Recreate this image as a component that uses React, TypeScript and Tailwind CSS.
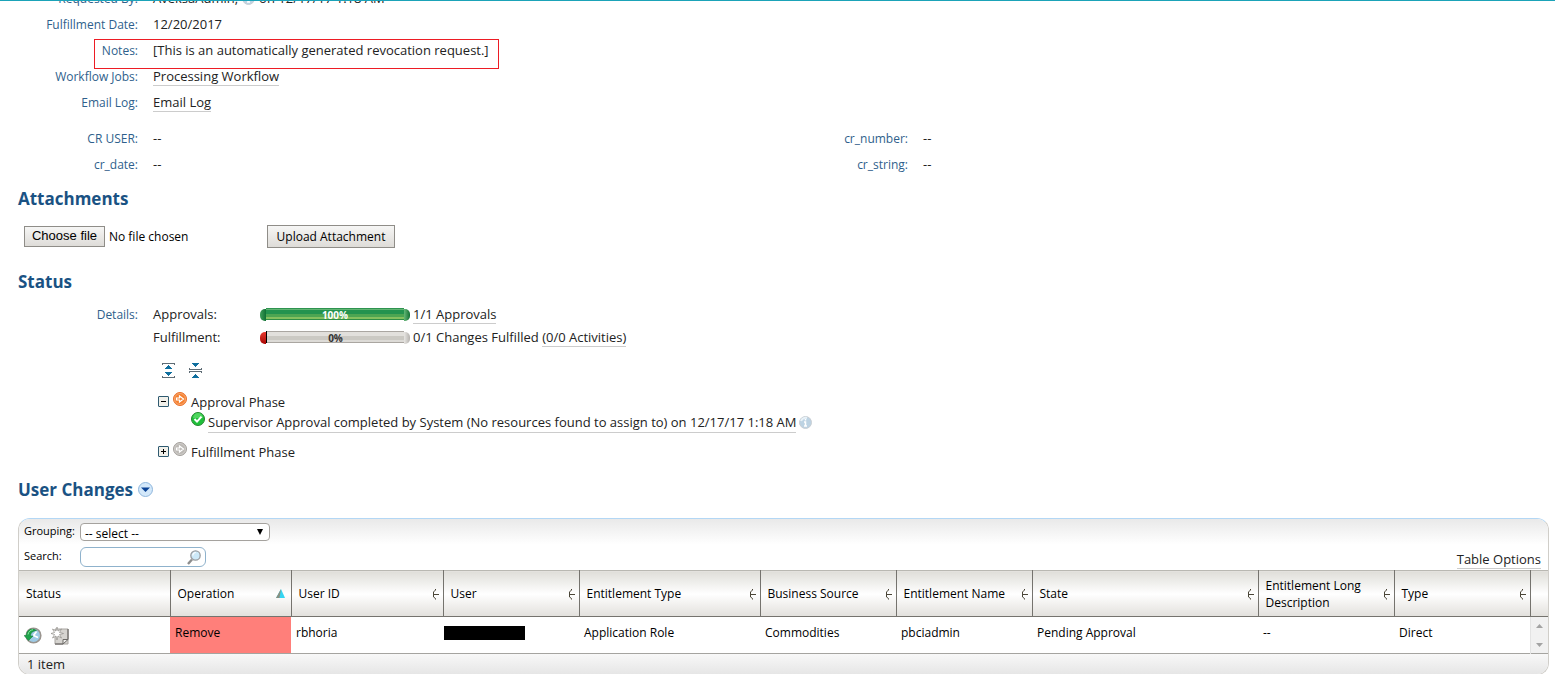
import { useRef } from "react";
import type { ReactNode } from "react";

const columns = [
  { name: "User ID", value: "rbhoria" },
  { name: "User", value: "" },
  { name: "Entitlement Type", value: "Application Role" },
  { name: "Business Source", value: "Commodities" },
  { name: "Entitlement Name", value: "pbciadmin" },
  { name: "State", value: "Pending Approval" },
  { name: "Entitlement Long Description", value: "--" },
  { name: "Type", value: "Direct" },
];

const InfoIcon = () => (
  <svg width="13" height="13" viewBox="0 0 13 13" className="shrink-0">
    <circle cx="6.5" cy="6.5" r="6" fill="#bdd3e3" stroke="#c9ced3" />
    <path d="M2 5a5 5 0 0 1 6-3" stroke="#e9f2f8" strokeWidth="2" fill="none" />
    <path d="M6.5 3v1.5M5 6h1.500v4M5 10h3" stroke="#fff" strokeWidth="1.5" fill="none" />
  </svg>
);

const ArrowBadge = ({ fill, ring }: { fill: string; ring: string }) => (
  <svg width="14" height="14" viewBox="0 0 14 14" className="shrink-0">
    <circle cx="7" cy="7" r="6.5" fill={fill} stroke={ring} />
    <circle cx="7" cy="7" r="5.5" fill="none" stroke="#fff" strokeOpacity="0.3" />
    <path d="M3.5 6h3V4L10.500 7l-4 3V8h-3z" fill={fill} stroke="#fff" strokeWidth="1.200" />
  </svg>
);

const CheckBadge = () => (
  <svg width="14" height="14" viewBox="0 0 14 14" className="shrink-0">
    <circle cx="7" cy="7" r="6.5" fill="#1fbf3a" stroke="#26862f" />
    <path d="M2 6a5 5 0 0 1 10 0z" fill="#4fd65e" />
    <path d="M3.500 7l2.500 2.600 4.500-5" fill="none" stroke="#fff" strokeWidth="2" />
  </svg>
);

const TreeBox = ({ open }: { open: boolean }) => (
  <svg width="11" height="11" viewBox="0 0 11 11" className="block">
    <rect x="0.5" y="0.5" width="10" height="10" rx="0.5" fill="#f1f0ea" stroke="#2f5a70" />
    <path d={open ? "M3 5.5h5" : "M3 5.5h5M5.500 3v5"} stroke="#000" />
  </svg>
);

const ExpandAllIcon = () => (
  <svg width="13" height="15" viewBox="0 0 13 15" shapeRendering="crispEdges">
    <path d="M0.500 2V.5h12V2M0.500 13v1.500h12V13" fill="none" stroke="#5f6c75" />
    <path d="M6 2h1v1h1v1h1v1h1v1H3V5h1V4h1V3h1zM3 9h7v1H9v1H8v1H7v1H6v-1H5v-1H4v-1H3z" fill="#0f6f9f" />
  </svg>
);

const CollapseAllIcon = () => (
  <svg width="13" height="15" viewBox="0 0 13 15" shapeRendering="crispEdges">
    <path d="M0.500 5v1.500h12V5M0.500 10V8.500h12V10" fill="none" stroke="#5f6c75" />
    <path d="M3 0h7v1H9v1H8v1H7v1H6V3H5V2H4V1H3zM6 11h1v1h1v1h1v1h1v1H3v-1h1v-1h1v-1h1z" fill="#0f6f9f" />
  </svg>
);

const MenuIcon = () => (
  <svg width="15" height="15" viewBox="0 0 15 15" className="block">
    <circle cx="7.5" cy="7.5" r="7" fill="#d3e8fa" stroke="#8fb6dc" />
    <path d="M3 5.500h9L7.500 10z" fill="#0a4296" />
  </svg>
);

const SearchIcon = () => (
  <svg width="14" height="15" viewBox="0 0 14 15" className="block">
    <path d="M5 9.500L1 14" stroke="#8d8d8d" strokeWidth="2.400" />
    <circle cx="8.500" cy="5.500" r="4.700" fill="#cde9f8" stroke="#9a9da0" strokeWidth="1.300" />
    <path d="M5.800 5.500a3 3 0 0 1 3-3" fill="none" stroke="#fff" strokeWidth="1.200" />
  </svg>
);

const SortIcon = () => (
  <svg width="9" height="9" viewBox="0 0 9 9" className="shrink-0">
    <path d="M5 0L9 9H0z" fill="#35d5f2" />
    <path d="M5 0L3.500 9H0z" fill="#8a8f80" />
  </svg>
);

const PinIcon = () => (
  <svg width="7" height="12" viewBox="0 0 7 12" className="shrink-0" fill="none" stroke="#4a4537">
    <path d="M1 6.500h6M3.500 1v1L1.500 4v5l2 1.500V11.500" />
  </svg>
);

const HistoryIcon = () => (
  <svg width="18" height="17" viewBox="0 0 18 17">
    <circle cx="9.500" cy="8.500" r="7.300" fill="#9ecbe6" stroke="#9a958f" strokeWidth="1.600" />
    <path d="M9.500 8.500l4.500 2M9.500 8.500l3-4" stroke="#fff" strokeWidth="1.800" />
    <path d="M0 8.500l4.500 5L9 9H6.500c0-3 2-5 6-5.500C8 .5 2.500 2.500 2.500 8.500z" fill="#1ea44b" stroke="#117a35" strokeWidth="0.500" />
    <path d="M4 7.500c.5-3 2.500-4.500 5-4.800" stroke="#8be79d" fill="none" />
  </svg>
);

const NewNoteIcon = () => (
  <svg width="18" height="18" viewBox="0 0 18 18">
    <path d="M4 2h13v15H4z" fill="#d6d4d0" stroke="#a8a5a1" />
    <path d="M17 2v10.500M12 17H4" stroke="#7d7a77" strokeWidth="1.500" />
    <path d="M12 17v-4.500h5z" fill="#f1f0ee" stroke="#6c6a67" />
    <path
      d="M6 0l1 4 3.500-2L8.500 5.500l4 1-4 1 2 3.500L7 9l-1 4-1-4-3.500 2 2-3.500-3.500-1 3.500-1L1.500 2 5 4z"
      fill="#fff"
      stroke="#8f8c88"
      strokeWidth="0.700"
    />
  </svg>
);

const ScrollArrow = ({ up }: { up?: boolean }) => (
  <svg width="7" height="4" viewBox="0 0 7 4" className="block">
    <path d={up ? "M0 4h7L3.500 0z" : "M0 0h7L3.500 4z"} fill="#a3a3a3" />
  </svg>
);

const Field = ({ label, children }: { label: string; children: ReactNode }) => (
  <div className="grid grid-cols-[138px_1fr] gap-[15px] h-[26px] items-baseline leading-[26px]">
    <span className="text-right text-xs leading-[26px] text-[#2f5f8c]">{label}</span>
    <span className="whitespace-nowrap">{children}</span>
  </div>
);

const TextLink = ({ children }: { children: ReactNode }) => (
  <a href="#" className="border-b border-[#ccc]">
    {children}
  </a>
);

const Heading = ({ children }: { children: ReactNode }) => (
  <h2 className="ml-[18px] text-[17px] leading-7 font-bold text-[#1a5283] flex items-center gap-[5px]">{children}</h2>
);

const ProgressBar = ({ percent }: { percent: number }) => {
  const done = percent === 100;
  return (
    <div role="progressbar" aria-label="Progress" aria-valuenow={percent} className="w-[150px] h-[14px] pt-px flex">
      <span
        className={`w-[6px] h-3 self-end shrink-0 rounded-l-[5px] ${
          done ? "bg-linear-to-r from-[#3f9f5b] to-[#0b7033]" : "bg-linear-to-b from-[#e8392f] to-[#a80000]"
        }`}
      />
      <span
        className={`flex-1 h-3 text-center text-[10px] leading-[14px] font-bold ${
          done
            ? "text-white bg-[linear-gradient(#2f9450_0_1px,#62b574_1px_2px,#23934f_2px_6px,#4da552_6px_9px,#84c05f_9px_11px,#2f8f45_11px)]"
            : "text-[#333] border-l border-l-black bg-[linear-gradient(#aaa6a1_0_1px,#e2e0dc_1px_5px,#cbc9c3_5px_9px,#dddbd7_9px_11px,#aaa6a1_11px)]"
        }`}
      >
        {percent}%
      </span>
      <span
        className={`w-[6px] h-3 self-end shrink-0 rounded-r-[5px] ${
          done ? "bg-linear-to-r from-[#63b877] to-[#0b7033]" : "bg-linear-to-r from-[#e8e6e3] to-[#b5b2ae]"
        }`}
      />
    </div>
  );
};

const App = () => {
  const fileInput = useRef<HTMLInputElement>(null);

  return (
    <div className="bg-white text-[#222] text-[13px] leading-5 font-['Open_Sans',sans-serif] border-t border-[#1ba3b8] overflow-hidden">
      <section className="-mt-4">
        <Field label="Requested By:">
          <span className="flex items-center gap-1">
            AveksaAdmin, <InfoIcon /> on 12/17/17 1:18 AM
          </span>
        </Field>
        <Field label="Fulfillment Date:">12/20/2017</Field>
        <div className="relative">
          <Field label="Notes:">[This is an automatically generated revocation request.]</Field>
          <div className="absolute left-[94px] top-[2px] w-[405px] h-[30px] border border-[#ed1c24] pointer-events-none" />
        </div>
        <Field label="Workflow Jobs:">
          <TextLink>Processing Workflow</TextLink>
        </Field>
        <Field label="Email Log:">
          <TextLink>Email Log</TextLink>
        </Field>
      </section>

      <section className="mt-[10px] pr-[15px] grid grid-cols-2">
        <Field label="CR USER:">--</Field>
        <Field label="cr_number:">--</Field>
        <Field label="cr_date:">--</Field>
        <Field label="cr_string:">--</Field>
      </section>

      <section className="mt-2">
        <Heading>Attachments</Heading>
        <div className="mt-[11px] ml-6 h-6 flex items-center">
          <input ref={fileInput} type="file" id="attachment" aria-label="Attachment" className="hidden" />
          <button
            type="button"
            onClick={() => fileInput.current?.click()}
            className="w-[81px] h-[21px] border border-[#8f8d88] bg-linear-to-b from-[#f6f6f5] to-[#dedcd8] text-black text-[13px] font-['Liberation_Sans',sans-serif] leading-4"
          >
            Choose file
          </button>
          <span className="ml-1 w-[158px] pt-px text-xs text-black">No file chosen</span>
          <button
            type="button"
            className="w-32 h-[23px] pt-px border border-[#8f8d88] bg-linear-to-b from-[#f6f6f5] to-[#dedcd8] text-black text-xs"
          >
            Upload Attachment
          </button>
        </div>
      </section>

      <section className="mt-5">
        <Heading>Status</Heading>
        <div className="mt-[6px] grid grid-cols-[138px_1fr] gap-[15px]">
          <span className="text-right text-xs leading-[25px] text-[#2f5f8c]">Details:</span>
          <div>
            <div className="h-[23px] flex items-center">
              <span className="w-[107px]">Approvals:</span>
              <ProgressBar percent={100} />
              <span className="ml-[3px]">
                <TextLink>1/1 Approvals</TextLink>
              </span>
            </div>
            <div className="h-[23px] flex items-center">
              <span className="w-[107px]">Fulfillment:</span>
              <ProgressBar percent={0} />
              <span className="ml-[3px]">
                0/1 Changes Fulfilled <TextLink>(0/0 Activities)</TextLink>
              </span>
            </div>

            <div className="mt-[15px] ml-[9px] h-[15px] flex gap-[14px]">
              <button type="button" aria-label="Expand all">
                <ExpandAllIcon />
              </button>
              <button type="button" aria-label="Collapse all">
                <CollapseAllIcon />
              </button>
            </div>

            <ul className="mt-[14px] ml-[5px]">
              <li>
                <div className="h-5 flex items-center gap-1">
                  <button type="button" aria-label="Collapse approval phase" className="pb-[2px]">
                    <TreeBox open />
                  </button>
                  <span className="h-5">
                    <ArrowBadge fill="#f5802f" ring="#e8702a" />
                  </span>
                  <span>Approval Phase</span>
                </div>
                <div className="ml-[33px] h-5 flex items-center gap-[3px]">
                  <span className="h-5">
                    <CheckBadge />
                  </span>
                  <TextLink>
                    Supervisor Approval completed by System (No resources found to assign to) on 12/17/17 1:18 AM
                  </TextLink>
                  <InfoIcon />
                </div>
              </li>
              <li className="mt-[10px] h-5 flex items-center gap-1">
                <button type="button" aria-label="Expand fulfillment phase" className="pb-[2px]">
                  <TreeBox open={false} />
                </button>
                <span className="h-5">
                  <ArrowBadge fill="#bcb9b5" ring="#a39f9b" />
                </span>
                <span>Fulfillment Phase</span>
              </li>
            </ul>
          </div>
        </div>
      </section>

      <section className="mt-[14px]">
        <Heading>
          User Changes
          <button type="button" aria-label="User changes menu" className="pb-[2px]">
            <MenuIcon />
          </button>
        </Heading>

        <div className="mt-[14px] ml-[18px] mr-[6px] border border-[#d0cec9] border-t-[#b3d7f5] rounded-xl overflow-hidden text-xs text-black">
          <div className="h-[51px] pl-[5px] pr-[7px] flex justify-between items-end bg-linear-to-b from-[#e9e9e9] to-white to-50%">
            <div className="grid grid-cols-[56px_1fr] gap-y-[6px] pb-[3px]">
              <label htmlFor="grouping" className="text-[11px] leading-4 whitespace-nowrap">
                Grouping:
              </label>
              <div className="relative">
                <select
                  id="grouping"
                  className="block appearance-none w-[190px] h-[18px] pl-1 pt-[2px] leading-4 bg-white border border-[#a5a29e] rounded-[4px]"
                >
                  <option>-- select --</option>
                </select>
                <svg width="6" height="6" viewBox="0 0 6 6" className="absolute left-[177px] top-[6px] pointer-events-none">
                  <path d="M0 0h6L3 6z" fill="#000" />
                </svg>
              </div>
              <label htmlFor="search" className="text-[11px] leading-[18px]">
                Search:
              </label>
              <div className="relative w-[126px]">
                <input
                  id="search"
                  type="text"
                  className="block w-full h-5 pl-1 pr-5 bg-white border border-[#8fb2cc] rounded-[6px]"
                />
                <button type="button" aria-label="Search" className="absolute right-[5px] top-[3px]">
                  <SearchIcon />
                </button>
              </div>
            </div>
            <span className="pb-px text-[13px] leading-5 text-[#222]">
              <TextLink>Table Options</TextLink>
            </span>
          </div>

          <table className="w-full table-fixed border-collapse">
            <colgroup>
              <col className="w-[151px]" />
              <col className="w-[121px]" />
              <col className="w-[152px]" />
              <col className="w-[136px]" />
              <col className="w-[181px]" />
              <col className="w-[136px]" />
              <col className="w-[136px]" />
              <col />
              <col className="w-[136px]" />
              <col className="w-[136px]" />
              <col className="w-[18px]" />
            </colgroup>
            <thead>
              <tr className="h-[46px] text-left leading-[17px] bg-linear-to-b from-[#e0dfda] via-white to-[#e3e1dd] border-t border-b border-t-[#b9b8b2] border-b-[#75736e]">
                <th className="pl-[7px] font-normal border-r border-[#75736e] border-t-[#b9b8b2]">Status</th>
                <th className="pl-[7px] pr-[6px] font-normal border-r border-[#75736e] border-t-[#b9b8b2]">
                  <div className="flex items-center justify-between">
                    Operation <SortIcon />
                  </div>
                </th>
                {columns.map((column) => (
                  <th key={column.name} className="pl-[7px] pr-1 font-normal border-r border-[#75736e] border-t-[#b9b8b2]">
                    <div className="flex items-center justify-between gap-1">
                      {column.name} <PinIcon />
                    </div>
                  </th>
                ))}
                <th aria-label="Scroll" />
              </tr>
            </thead>
            <tbody>
              <tr className="h-[37px] bg-white border-b border-[#a5a4a0]">
                <td className="pl-[5px]">
                  <div className="flex gap-[9px] pt-[2px]">
                    <HistoryIcon />
                    <NewNoteIcon />
                  </div>
                </td>
                <td className="pl-[5px] pb-1 bg-[#ff7f7a]">Remove</td>
                {columns.map((column) => (
                  <td key={column.name} className="pl-[5px] pb-1">
                    {column.value || <div className="-ml-1 w-[81px] h-[14px] bg-black" />}
                  </td>
                ))}
                <td className="bg-[#f1f1f1] border-l border-[#e3e3e3]">
                  <div className="flex flex-col items-center gap-[15px]">
                    <ScrollArrow up />
                    <ScrollArrow />
                  </div>
                </td>
              </tr>
            </tbody>
          </table>

          <div className="h-5 pl-2 text-[13px] leading-5 text-[#222] bg-linear-to-b from-[#f8f8f8] to-[#e6e6e6]">1 item</div>
        </div>
      </section>
    </div>
  );
};

export default App;
